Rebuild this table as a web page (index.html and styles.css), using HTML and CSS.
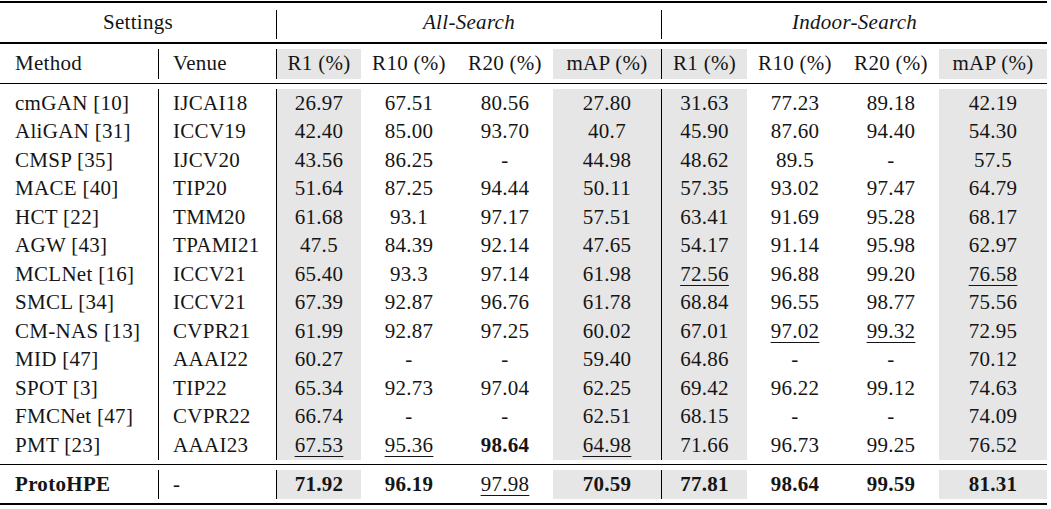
FILE: index.html
```html
<!DOCTYPE html>
<html>
<head>
<meta charset="utf-8">
<link rel="stylesheet" href="styles.css">
</head>
<body>
<div class="tbl">
  <div class="rule thick top"></div>
  <div class="row head1">
    <div class="c s2 center">Settings</div>
    <div class="c s4 center it bl">All-Search</div>
    <div class="c s4 center it bl">Indoor-Search</div>
  </div>
  <div class="rule mid"></div>
  <div class="row head2">
    <div class="c left">Method</div>
    <div class="c left bl">Venue</div>
    <div class="c sh bl">R1 (%)</div>
    <div class="c">R10 (%)</div>
    <div class="c">R20 (%)</div>
    <div class="c sh">mAP (%)</div>
    <div class="c sh bl">R1 (%)</div>
    <div class="c">R10 (%)</div>
    <div class="c">R20 (%)</div>
    <div class="c sh">mAP (%)</div>
  </div>
  <div class="rule mid"></div>
  <div class="body">
    <div class="row data"><div class="c left">cmGAN [10]</div><div class="c left bl">IJCAI18</div><div class="c sh bl">26.97</div><div class="c">67.51</div><div class="c">80.56</div><div class="c sh">27.80</div><div class="c sh bl">31.63</div><div class="c">77.23</div><div class="c">89.18</div><div class="c sh">42.19</div></div>
    <div class="row data"><div class="c left">AliGAN [31]</div><div class="c left bl">ICCV19</div><div class="c sh bl">42.40</div><div class="c">85.00</div><div class="c">93.70</div><div class="c sh">40.7</div><div class="c sh bl">45.90</div><div class="c">87.60</div><div class="c">94.40</div><div class="c sh">54.30</div></div>
    <div class="row data"><div class="c left">CMSP [35]</div><div class="c left bl">IJCV20</div><div class="c sh bl">43.56</div><div class="c">86.25</div><div class="c">-</div><div class="c sh">44.98</div><div class="c sh bl">48.62</div><div class="c">89.5</div><div class="c">-</div><div class="c sh">57.5</div></div>
    <div class="row data"><div class="c left">MACE [40]</div><div class="c left bl">TIP20</div><div class="c sh bl">51.64</div><div class="c">87.25</div><div class="c">94.44</div><div class="c sh">50.11</div><div class="c sh bl">57.35</div><div class="c">93.02</div><div class="c">97.47</div><div class="c sh">64.79</div></div>
    <div class="row data"><div class="c left">HCT [22]</div><div class="c left bl">TMM20</div><div class="c sh bl">61.68</div><div class="c">93.1</div><div class="c">97.17</div><div class="c sh">57.51</div><div class="c sh bl">63.41</div><div class="c">91.69</div><div class="c">95.28</div><div class="c sh">68.17</div></div>
    <div class="row data"><div class="c left">AGW [43]</div><div class="c left bl">TPAMI21</div><div class="c sh bl">47.5</div><div class="c">84.39</div><div class="c">92.14</div><div class="c sh">47.65</div><div class="c sh bl">54.17</div><div class="c">91.14</div><div class="c">95.98</div><div class="c sh">62.97</div></div>
    <div class="row data"><div class="c left">MCLNet [16]</div><div class="c left bl">ICCV21</div><div class="c sh bl">65.40</div><div class="c">93.3</div><div class="c">97.14</div><div class="c sh">61.98</div><div class="c sh bl"><span class="u">72.56</span></div><div class="c">96.88</div><div class="c">99.20</div><div class="c sh"><span class="u">76.58</span></div></div>
    <div class="row data"><div class="c left">SMCL [34]</div><div class="c left bl">ICCV21</div><div class="c sh bl">67.39</div><div class="c">92.87</div><div class="c">96.76</div><div class="c sh">61.78</div><div class="c sh bl">68.84</div><div class="c">96.55</div><div class="c">98.77</div><div class="c sh">75.56</div></div>
    <div class="row data"><div class="c left">CM-NAS [13]</div><div class="c left bl">CVPR21</div><div class="c sh bl">61.99</div><div class="c">92.87</div><div class="c">97.25</div><div class="c sh">60.02</div><div class="c sh bl">67.01</div><div class="c"><span class="u">97.02</span></div><div class="c"><span class="u">99.32</span></div><div class="c sh">72.95</div></div>
    <div class="row data"><div class="c left">MID [47]</div><div class="c left bl">AAAI22</div><div class="c sh bl">60.27</div><div class="c">-</div><div class="c">-</div><div class="c sh">59.40</div><div class="c sh bl">64.86</div><div class="c">-</div><div class="c">-</div><div class="c sh">70.12</div></div>
    <div class="row data"><div class="c left">SPOT [3]</div><div class="c left bl">TIP22</div><div class="c sh bl">65.34</div><div class="c">92.73</div><div class="c">97.04</div><div class="c sh">62.25</div><div class="c sh bl">69.42</div><div class="c">96.22</div><div class="c">99.12</div><div class="c sh">74.63</div></div>
    <div class="row data"><div class="c left">FMCNet [47]</div><div class="c left bl">CVPR22</div><div class="c sh bl">66.74</div><div class="c">-</div><div class="c">-</div><div class="c sh">62.51</div><div class="c sh bl">68.15</div><div class="c">-</div><div class="c">-</div><div class="c sh">74.09</div></div>
    <div class="row data"><div class="c left">PMT [23]</div><div class="c left bl">AAAI23</div><div class="c sh bl"><span class="u">67.53</span></div><div class="c"><span class="u">95.36</span></div><div class="c"><b>98.64</b></div><div class="c sh"><span class="u">64.98</span></div><div class="c sh bl">71.66</div><div class="c">96.73</div><div class="c">99.25</div><div class="c sh">76.52</div></div>
  </div>
  <div class="rule mid"></div>
  <div class="row foot">
    <div class="c left"><b>ProtoHPE</b></div><div class="c left bl">-</div><div class="c sh bl"><b>71.92</b></div><div class="c"><b>96.19</b></div><div class="c"><span class="u">97.98</span></div><div class="c sh"><b>70.59</b></div><div class="c sh bl"><b>77.81</b></div><div class="c"><b>98.64</b></div><div class="c"><b>99.59</b></div><div class="c sh"><b>81.31</b></div>
  </div>
  <div class="rule thick bottom"></div>
</div>
</body>
</html>
```
FILE: styles.css
```css
html, body {
  margin: 0;
  padding: 0;
  background: #fff;
}
body {
  font-family: "Liberation Serif", "Times New Roman", serif;
  font-size: 21px;
  letter-spacing: 0.3px;
  color: #151515;
}
.tbl {
  width: 1047px;
  display: flex;
  flex-direction: column;
}
.rule {
  background: #000;
}
.rule.thick {
  height: 2px;
}
.rule.top {
  margin-top: 1px;
  margin-bottom: 7px;
}
.rule.bottom {
  margin-top: 4px;
}
.rule.mid {
  height: 1.5px;
  margin-top: 4px;
  margin-bottom: 5px;
}
.row {
  display: grid;
  grid-template-columns: 158px 118px 85px 96px 96px 108px 86px 96px 96px 108px;
}
.head1 {
  height: 28px;
}
.head1 .c {
  padding-bottom: 4px;
}
.head2 {
  height: 30px;
}
.data {
  height: 28.5px;
}
.foot {
  height: 29px;
}
.c {
  display: flex;
  align-items: center;
  justify-content: center;
  box-sizing: border-box;
  white-space: nowrap;
}
.c.left {
  justify-content: flex-start;
  padding-left: 15px;
}
.c.left.bl {
  padding-left: 14px;
}
.s2 { grid-column: span 2; }
.s4 { grid-column: span 4; }
.it { font-style: italic; }
.bl { border-left: 1px solid #000; }
.sh { background: #e6e6e6; }
.u {
  text-decoration: underline;
  text-decoration-thickness: 1px;
  text-underline-offset: 4px;
}
b { font-weight: bold; }
```
